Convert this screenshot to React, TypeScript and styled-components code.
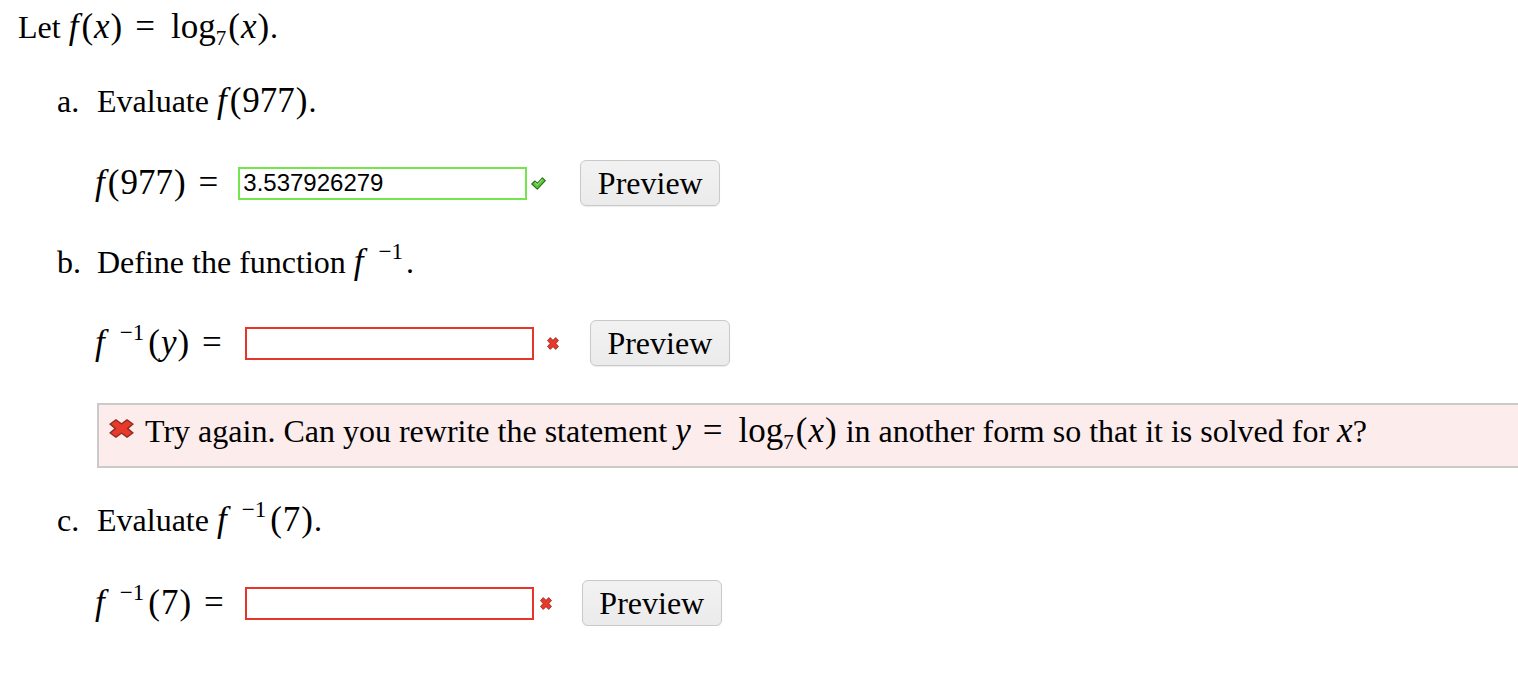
import React from "react";
import styled, { createGlobalStyle } from "styled-components";

const Global = createGlobalStyle`
  html, body { margin: 0; padding: 0; background: #fff; overflow: hidden; }
  body { font-family: "Liberation Serif", "Times New Roman", serif; color: #000; }
`;

const Page = styled.div`
  padding: 9px 0 0 18px;
  font-size: 32px;
  line-height: 36px;
  overflow: hidden;
`;

const TextLine = styled.div`
  white-space: nowrap;
`;

const Part = styled.div<{ $mt: number }>`
  margin-top: ${(p) => p.$mt}px;
  padding-left: 39px;
  display: flex;
  white-space: nowrap;
`;

const PartLetter = styled.span`
  width: 40px;
  flex: none;
`;

const AnswerRow = styled.div<{ $mt: number }>`
  margin-top: ${(p) => p.$mt}px;
  padding-left: 77px;
  height: 46px;
  display: flex;
  align-items: center;
  white-space: nowrap;
`;

const Math = styled.span`
  font-size: 35px;
`;

const MI = styled.span`
  font-style: italic;
`;

const FI = styled.span`
  font-style: italic;
  margin-right: 2px;
`;

const Paren = styled.span`
  margin: 0 1px;
`;

const Op = styled.span`
  margin-left: 4px;
`;

const Sub = styled.span`
  font-size: 21px;
  line-height: 0;
  vertical-align: -7px;
  margin-right: 1px;
`;

const Sup = styled.span`
  font-size: 23px;
  line-height: 0;
  vertical-align: 14px;
  margin-left: 15px;
  margin-right: 3px;
`;

const Rel = styled.span`
  margin: 0 12px;
`;

const AnswerInput = styled.input<{ $state: "ok" | "bad"; $ml: number }>`
  box-sizing: border-box;
  width: 289px;
  height: 33px;
  margin: 0 0 0 ${(p) => p.$ml}px;
  padding: 0 3px;
  border: 2px solid ${(p) => (p.$state === "ok" ? "#72e64c" : "#e5362b")};
  border-radius: 0;
  outline: none;
  background: #fff;
  font-family: "Liberation Sans", Arial, sans-serif;
  font-size: 24px;
  color: #000;
`;

const StatusIcon = styled.span<{ $ml: number; $mr: number }>`
  display: inline-flex;
  margin-left: ${(p) => p.$ml}px;
  margin-right: ${(p) => p.$mr}px;
`;

const PreviewButton = styled.button`
  box-sizing: border-box;
  width: 140px;
  height: 46px;
  padding: 0;
  border: 1px solid #c9c9c9;
  border-radius: 6px;
  background: linear-gradient(#f2f2f2, #ebebeb);
  font-family: "Liberation Serif", "Times New Roman", serif;
  font-size: 32px;
  color: #000;
  box-shadow: 0 1px 1px rgba(0, 0, 0, 0.08);
`;

const Feedback = styled.div`
  margin-top: 37px;
  margin-left: 79px;
  margin-right: -30px;
  box-sizing: border-box;
  height: 65px;
  border: 2px solid #cacaca;
  background: #fcecec;
  padding: 8px 0 0 10px;
  display: flex;
  align-items: flex-start;
  white-space: nowrap;
`;

const FeedbackIcon = styled.span`
  display: inline-flex;
  margin-top: 6px;
  margin-right: 11px;
`;

const Check = () => (
  <svg width="15" height="13" viewBox="0 0 15 13">
    <path
      d="M0.8 7 L3.9 4 L6.3 6.3 L11.4 0.8 L14.3 3.6 L6.3 12.2 Z"
      fill="#58c936"
      stroke="#2a6e1e"
      strokeWidth="1.1"
      strokeLinejoin="round"
    />
    <path d="M3.9 5.3 L6.3 7.6 L11.4 2.2" fill="none" stroke="#b9f39e" strokeWidth="0.9" />
  </svg>
);

const Cross = ({ w, h }: { w: number; h: number }) => (
  <svg width={w} height={h} viewBox="0 0 14 14" preserveAspectRatio="none">
    <path
      d="M0.6 3.8 L3.8 0.6 L7 3.6 L10.2 0.6 L13.4 3.8 L10.4 7 L13.4 10.2 L10.2 13.4 L7 10.4 L3.8 13.4 L0.6 10.2 L3.6 7 Z"
      fill="#e8392b"
      stroke="#8e2a20"
      strokeWidth="0.9"
      strokeLinejoin="round"
    />
  </svg>
);

const FInv = () => (
  <>
    <MI>f</MI>
    <Sup>−1</Sup>
  </>
);

export default function App() {
  return (
    <>
      <Global />
      <Page>
        <TextLine>
          Let{" "}
          <Math>
            <FI>f</FI>
            <Paren>(</Paren>
            <MI>x</MI>
            <Paren>)</Paren>
            <Rel>=</Rel>
            <Op>log</Op>
            <Sub>7</Sub>
            <Paren>(</Paren>
            <MI>x</MI>
            <Paren>)</Paren>
          </Math>
          .
        </TextLine>

        <Part $mt={38}>
          <PartLetter>a.</PartLetter>
          <span>
            Evaluate{" "}
            <Math>
              <FI>f</FI>
              <Paren>(</Paren>977<Paren>)</Paren>
            </Math>
            .
          </span>
        </Part>

        <AnswerRow $mt={41}>
          <Math>
            <FI>f</FI>
            <Paren>(</Paren>977<Paren>)</Paren>
            <Rel>=</Rel>
          </Math>
          <AnswerInput $state="ok" $ml={8} defaultValue="3.537926279" readOnly />
          <StatusIcon $ml={4} $mr={34}>
            <Check />
          </StatusIcon>
          <PreviewButton>Preview</PreviewButton>
        </AnswerRow>

        <Part $mt={38}>
          <PartLetter>b.</PartLetter>
          <span>
            Define the function{" "}
            <Math>
              <FInv />
            </Math>
            .
          </span>
        </Part>

        <AnswerRow $mt={40}>
          <Math>
            <FInv />
            <Paren>(</Paren>
            <MI>y</MI>
            <Paren>)</Paren>
            <Rel>=</Rel>
          </Math>
          <AnswerInput $state="bad" $ml={11} defaultValue="" readOnly />
          <StatusIcon $ml={13} $mr={31}>
            <Cross w={12} h={13} />
          </StatusIcon>
          <PreviewButton>Preview</PreviewButton>
        </AnswerRow>

        <Feedback>
          <FeedbackIcon>
            <Cross w={25} h={19} />
          </FeedbackIcon>
          <span>
            Try again. Can you rewrite the statement{" "}
            <Math>
              <MI>y</MI>
              <Rel>=</Rel>
              <Op>log</Op>
              <Sub>7</Sub>
              <Paren>(</Paren>
              <MI>x</MI>
              <Paren>)</Paren>
            </Math>{" "}
            in another form so that it is solved for{" "}
            <Math>
              <MI>x</MI>
            </Math>
            ?
          </span>
        </Feedback>

        <Part $mt={34}>
          <PartLetter>c.</PartLetter>
          <span>
            Evaluate{" "}
            <Math>
              <FInv />
              <Paren>(</Paren>7<Paren>)</Paren>
            </Math>
            .
          </span>
        </Part>

        <AnswerRow $mt={42}>
          <Math>
            <FInv />
            <Paren>(</Paren>7<Paren>)</Paren>
            <Rel>=</Rel>
          </Math>
          <AnswerInput $state="bad" $ml={9} defaultValue="" readOnly />
          <StatusIcon $ml={6} $mr={30}>
            <Cross w={12} h={13} />
          </StatusIcon>
          <PreviewButton>Preview</PreviewButton>
        </AnswerRow>
      </Page>
    </>
  );
}
